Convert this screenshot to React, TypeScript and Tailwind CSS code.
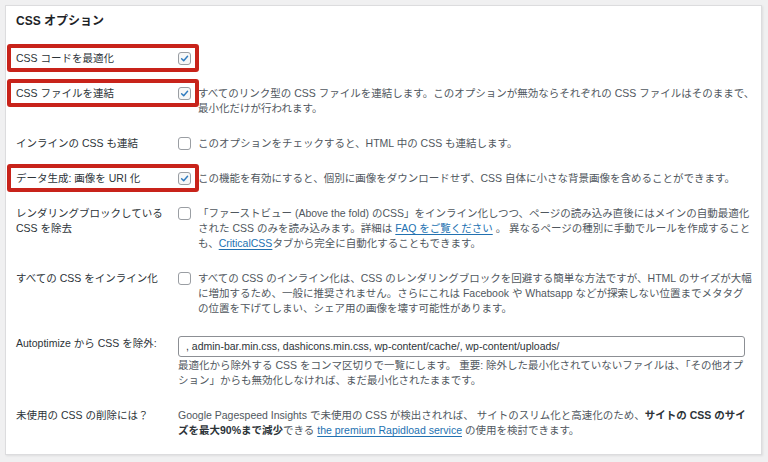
import type { ReactNode } from 'react';

function Checkbox({ checked }: { checked?: boolean }) {
  return (
    <span
      className={`mt-[1px] flex h-[13px] w-[13px] shrink-0 items-center justify-center rounded-[3px] border ${
        checked ? 'border-[#9a9ea3] bg-[#f6f7f7]' : 'border-[#9a9ea3] bg-white'
      }`}
    >
      {checked && (
        <svg viewBox="0 0 10 10" className="h-[9px] w-[9px]">
          <path
            d="M1.8 5.3 L4.1 7.6 L8.4 2.6"
            fill="none"
            stroke="#2f7bbf"
            strokeWidth="1.6"
            strokeLinecap="round"
            strokeLinejoin="round"
          />
        </svg>
      )}
    </span>
  );
}

function Link({ children }: { children: ReactNode }) {
  return <span className="text-[#2271b1] underline underline-offset-[2px]">{children}</span>;
}

function Row({
  label,
  children,
  marked,
  checkbox,
}: {
  label: ReactNode;
  children: ReactNode;
  marked?: boolean;
  checkbox?: 'on' | 'off';
}) {
  return (
    <div className="relative flex py-[10px] leading-[15px]">
      {/* red highlight around label + checkbox */}
      {marked && (
        <div className="absolute left-[-9px] top-[3px] h-[28px] w-[192px] rounded-[3px] border-[4px] border-[#c8231a]" />
      )}
      <div className="w-[162px] shrink-0 text-[#2c3338]">{label}</div>
      <div className="flex flex-1 gap-[7px] pr-[17px] text-[#50575e]">
        {checkbox && <Checkbox checked={checkbox === 'on'} />}
        <div className="whitespace-nowrap">{children}</div>
      </div>
    </div>
  );
}

export default function App() {
  return (
    <div className="min-h-screen w-full bg-[#f0f0f1] pl-[5px] pt-[5px] text-[10.5px] [font-family:'Liberation_Sans','Noto_Sans_CJK_JP',sans-serif]">
      <div className="h-[450px] w-[757px] border border-[#dcdcde] bg-white pl-[10px] pt-[7px] shadow-[1px_1px_2px_rgba(0,0,0,0.08)]">
        <h2 className="text-[12px] font-bold leading-[16px] text-[#1d2327]">CSS オプション</h2>

        <div className="mt-[12px]">
          <Row label="CSS コードを最適化" marked checkbox="on">
            {''}
          </Row>

          <Row label="CSS ファイルを連結" marked checkbox="on">
            すべてのリンク型の CSS ファイルを連結します。このオプションが無効ならそれぞれの CSS ファイルはそのままで、
            <br />
            最小化だけが行われます。
          </Row>

          <Row label="インラインの CSS も連結" checkbox="off">
            このオプションをチェックすると、HTML 中の CSS も連結します。
          </Row>

          <Row label="データ生成: 画像を URI 化" marked checkbox="on">
            この機能を有効にすると、個別に画像をダウンロードせず、CSS 自体に小さな背景画像を含めることができます。
          </Row>

          <Row
            label={
              <>
                レンダリングブロックしている
                <br />
                CSS を除去
              </>
            }
            checkbox="off"
          >
            「ファーストビュー (Above the fold) のCSS」をインライン化しつつ、ページの読み込み直後にはメインの自動最適化
            <br />
            された CSS のみを読み込みます。詳細は <Link>FAQ をご覧ください</Link> 。 異なるページの種別に手動でルールを作成すること
            <br />
            も、<Link>CriticalCSS</Link>タブから完全に自動化することもできます。
          </Row>

          <Row label="すべての CSS をインライン化" checkbox="off">
            すべての CSS のインライン化は、CSS のレンダリングブロックを回避する簡単な方法ですが、HTML のサイズが大幅
            <br />
            に増加するため、一般に推奨されません。さらにこれは Facebook や Whatsapp などが探索しない位置までメタタグ
            <br />
            の位置を下げてしまい、シェア用の画像を壊す可能性があります。
          </Row>

          <div className="flex py-[10px] leading-[15px]">
            <div className="w-[162px] shrink-0 text-[#2c3338]">Autoptimize から CSS を除外:</div>
            <div className="flex-1 pr-[17px] text-[#50575e]">
              <div className="flex h-[21px] w-[567px] items-center rounded-[3px] border border-[#8c8f94] bg-white px-[7px] text-[#2c3338]">
                , admin-bar.min.css, dashicons.min.css, wp-content/cache/, wp-content/uploads/
              </div>
              <div className="mt-[1px] whitespace-nowrap">
                最適化から除外する CSS をコンマ区切りで一覧にします。 重要: 除外した最小化されていないファイルは、「その他オプ
                <br />
                ション」からも無効化しなければ、まだ最小化されたままです。
              </div>
            </div>
          </div>

          <Row label="未使用の CSS の削除には？">
            Google Pagespeed Insights で未使用の CSS が検出されれば、 サイトのスリム化と高速化のため、
            <b className="font-bold text-[#2c3338]">サイトの CSS のサイ</b>
            <br />
            <b className="font-bold text-[#2c3338]">ズを最大90%まで減少</b>できる{' '}
            <Link>the premium Rapidload service</Link> の使用を検討できます。
          </Row>
        </div>
      </div>
    </div>
  );
}
